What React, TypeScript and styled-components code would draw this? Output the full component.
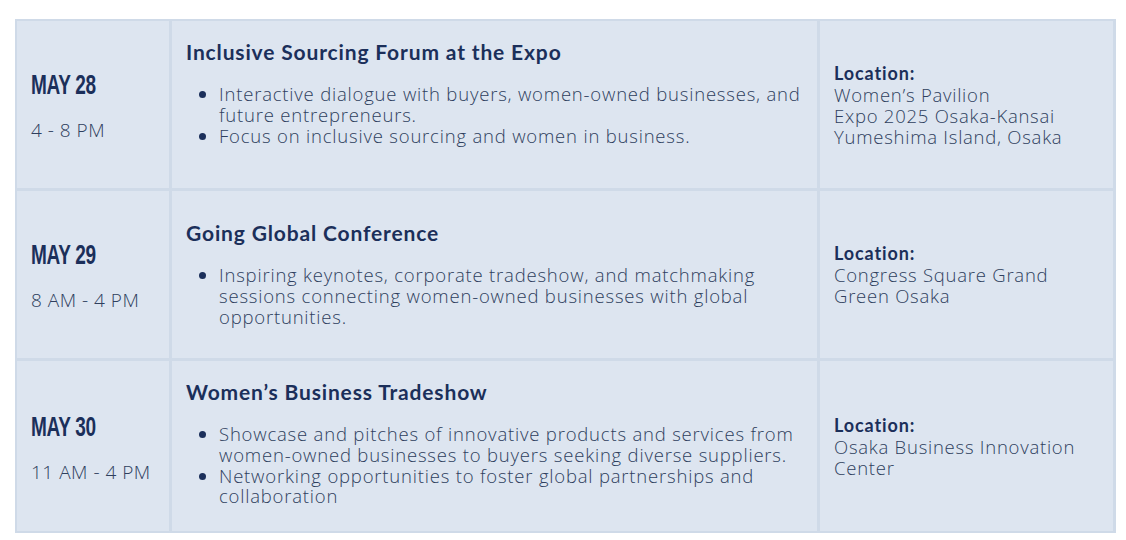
import styled, { createGlobalStyle } from "styled-components";

const GlobalStyle = createGlobalStyle`
  body {
    margin: 0;
    background: #ffffff;
    font-family: "Open Sans", "Liberation Sans", sans-serif;
  }
`;

const Page = styled.div`
  padding: 19px 10px 10px 15px;
`;

const Schedule = styled.div`
  display: grid;
  grid-template-columns: 155px 648px 1fr;
  grid-auto-rows: 170px;
  width: 1101px;
  box-sizing: border-box;
  background: #dde5f0;
  border: 2px solid #cfdae8;
  border-right-width: 3px;
`;

const Cell = styled.div<{ $last?: boolean }>`
  display: flex;
  flex-direction: column;
  justify-content: center;
  box-sizing: border-box;
  border-right: 3px solid #cfdae8;
  border-bottom: ${(p) => (p.$last ? "none" : "3px solid #cfdae8")};

  &:nth-child(3n) {
    border-right: none;
  }
`;

const DateCell = styled(Cell)`
  padding: 6px 0 0 14px;
`;

const EventCell = styled(Cell)<{ $top: number }>`
  justify-content: flex-start;
  padding: ${(p) => p.$top}px 14px 0 14px;
`;

const LocationCell = styled(Cell)`
  padding: 0 14px 0 14px;
`;

const Day = styled.div`
  font-family: "Liberation Sans Narrow", "Liberation Sans", sans-serif;
  font-weight: 700;
  font-size: 28px;
  line-height: 30px;
  color: #1b2f5a;
  letter-spacing: -0.5px;
  transform: scaleX(0.68);
  transform-origin: left center;
  margin-top: -4px;
`;

const Time = styled.div`
  margin-top: 19px;
  font-size: 19px;
  font-weight: 300;
  letter-spacing: 0.5px;
  color: #2f3f5e;
  line-height: 22px;
`;

const Title = styled.h3`
  margin: 0;
  font-family: "Lato", "Open Sans", sans-serif;
  font-weight: 700;
  font-size: 21px;
  letter-spacing: 0.85px;
  line-height: 26px;
  color: #1b2f5a;
`;

const Bullets = styled.ul`
  margin: 19px 0 0 0;
  padding-left: 33px;
  font-size: 18.5px;
  font-weight: 300;
  letter-spacing: 0.8px;
  line-height: 20.8px;
  color: #2f3f5e;

  li::marker {
    color: #1b2f5a;
  }
`;

const LocLabel = styled.div`
  font-family: "Lato", "Open Sans", sans-serif;
  font-weight: 700;
  font-size: 18px;
  letter-spacing: 0.9px;
  line-height: 21px;
  color: #1b2f5a;
`;

const LocLine = styled.div`
  font-size: 18.5px;
  font-weight: 300;
  letter-spacing: 0.75px;
  line-height: 21px;
  color: #2f3f5e;
`;

type Event = {
  day: string;
  time: string;
  title: string;
  bullets: string[];
  location: string[];
  top: number;
};

const events: Event[] = [
  {
    day: "MAY 28",
    time: "4 - 8 PM",
    title: "Inclusive Sourcing Forum at the Expo",
    bullets: [
      "Interactive dialogue with buyers, women-owned businesses, and future entrepreneurs.",
      "Focus on inclusive sourcing and women in business.",
    ],
    location: ["Women’s Pavilion", "Expo 2025 Osaka-Kansai", "Yumeshima Island, Osaka"],
    top: 18,
  },
  {
    day: "MAY 29",
    time: "8 AM - 4 PM",
    title: "Going Global Conference",
    bullets: [
      "Inspiring keynotes, corporate tradeshow, and matchmaking sessions connecting women-owned businesses with global opportunities.",
    ],
    location: ["Congress Square Grand", "Green Osaka"],
    top: 29,
  },
  {
    day: "MAY 30",
    time: "11 AM - 4 PM",
    title: "Women’s Business Tradeshow",
    bullets: [
      "Showcase and pitches of innovative products and services from women-owned businesses to buyers seeking diverse suppliers.",
      "Networking opportunities to foster global partnerships and collaboration",
    ],
    location: ["Osaka Business Innovation", "Center"],
    top: 18,
  },
];

export default function App() {
  return (
    <>
      <GlobalStyle />
      <Page>
        <Schedule>
          {events.map((ev, i) => {
            const last = i === events.length - 1;
            return [
              <DateCell key={ev.day + "d"} $last={last}>
                <Day>{ev.day}</Day>
                <Time>{ev.time}</Time>
              </DateCell>,
              <EventCell key={ev.day + "e"} $last={last} $top={ev.top}>
                <Title>{ev.title}</Title>
                <Bullets>
                  {ev.bullets.map((b) => (
                    <li key={b}>{b}</li>
                  ))}
                </Bullets>
              </EventCell>,
              <LocationCell key={ev.day + "l"} $last={last}>
                <LocLabel>Location:</LocLabel>
                {ev.location.map((l) => (
                  <LocLine key={l}>{l}</LocLine>
                ))}
              </LocationCell>,
            ];
          })}
        </Schedule>
      </Page>
    </>
  );
}
